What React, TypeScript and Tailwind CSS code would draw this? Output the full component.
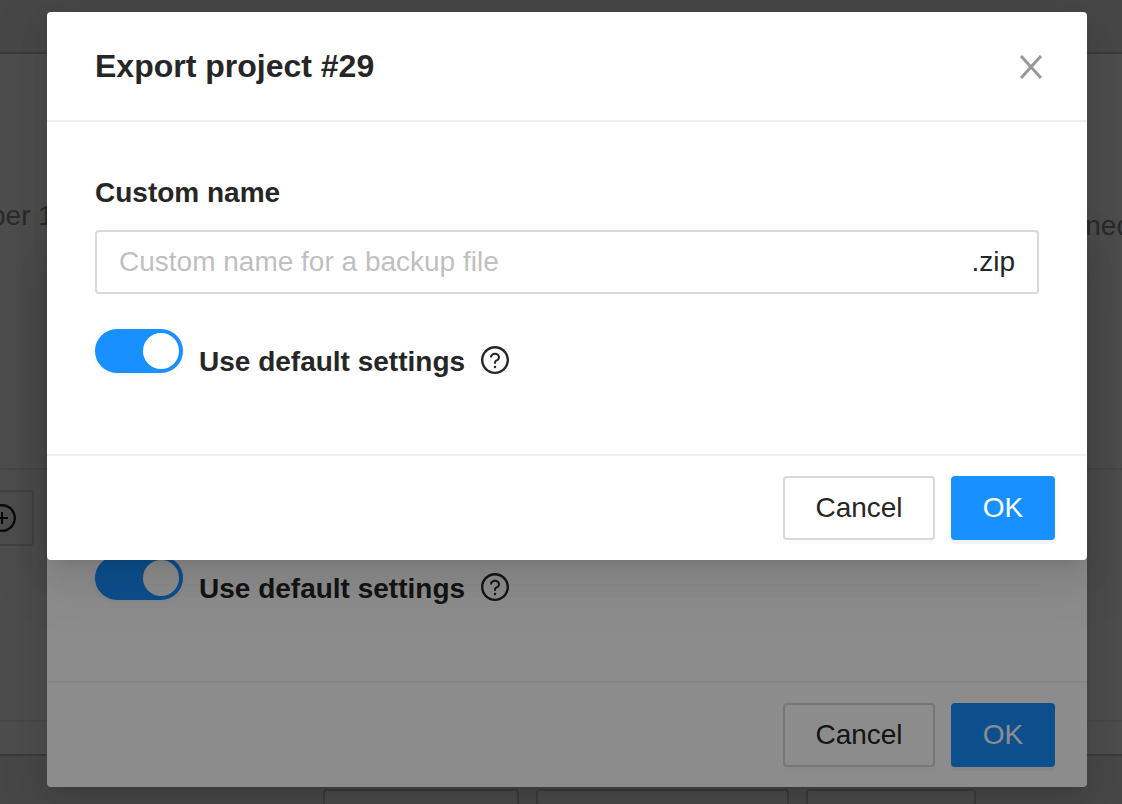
import React from 'react';
import { AiOutlineQuestionCircle, AiOutlinePlusCircle } from 'react-icons/ai';

function Mask() {
  return <div className="absolute inset-0 bg-black/45" />;
}

function ExportModal({ top }: { top: string }) {
  return (
    <div className={`absolute left-[47px] w-[1040px] rounded bg-white text-[#262626] shadow-[0_6px_12px_-8px_rgba(0,0,0,0.12),0_12px_32px_rgba(0,0,0,0.08),0_18px_56px_16px_rgba(0,0,0,0.05)] ${top}`}>
      <header className="flex h-[110px] items-center justify-between border-b-2 border-[#f0f0f0] pl-12 pr-11">
        <h2 className="text-[32px] font-bold leading-[44px]">Export project #29</h2>
        <svg viewBox="0 0 24 24" className="mt-[2px] size-6 text-[#999999]" fill="none" stroke="currentColor" strokeWidth="3">
          <path d="M2 1 22 23M22 1 2 23" />
        </svg>
      </header>

      <div className="h-[332px] px-12 pt-[49px]">
        <label className="block text-[28px] font-bold leading-[44px]">Custom name</label>
        <div className="mt-[15px] flex h-16 items-center justify-between rounded border-2 border-[#d9d9d9] px-[22px] text-[28px]">
          <span className="text-[#bfbfbf]">Custom name for a backup file</span>
          <span>.zip</span>
        </div>

        <div className="mt-[35px] flex items-start">
          <div className="flex h-11 w-[88px] items-center justify-end rounded-full bg-[#1890ff] pr-1 shadow-[0_2px_4px_rgba(0,0,0,0.05)]">
            <div className="size-9 rounded-full bg-white" />
          </div>
          <span className="ml-4 mt-[11px] text-[28px] font-bold leading-[44px]">Use default settings</span>
          <AiOutlineQuestionCircle className="ml-[14px] mt-[15px] size-8 text-[#262626]" />
        </div>
      </div>

      <footer className="flex h-[106px] items-start justify-end gap-4 border-t-2 border-[#f0f0f0] px-8 pt-5">
        <button className="h-16 w-[152px] rounded border-2 border-[#d9d9d9] bg-white text-[28px] shadow-[0_4px_0_rgba(0,0,0,0.015)]">
          Cancel
        </button>
        <button className="h-16 w-[104px] rounded bg-[#1890ff] text-[28px] text-white shadow-[0_4px_0_rgba(0,0,0,0.045)]">
          OK
        </button>
      </footer>
    </div>
  );
}

export default function App() {
  return (
    <div className="relative h-[804px] w-[1122px] overflow-hidden bg-[#ededed] font-['Liberation_Sans',Arial,sans-serif] text-[#262626]">
      {/* page behind the dialogs */}
      <div className="h-[54px] border-b-2 border-[#c4c4c4] bg-[#ededed]" />
      <div className="flex h-[416px] items-start justify-between border-b-2 border-[#ececec] bg-white text-[28px] text-[#8c8c8c]">
        <span className="-ml-[10px] mt-[144px] leading-[36px]">ber 1</span>
        <span className="-mr-[10px] mt-[154px] leading-[36px]">ned</span>
      </div>
      <div className="h-[252px] border-b-2 border-[#ececec] bg-white pt-5">
        <div className="-ml-[30px] flex h-14 w-[64px] items-center justify-center rounded border-2 border-[#d9d9d9]">
          <AiOutlinePlusCircle className="size-8" />
        </div>
      </div>
      <div className="h-[34px] border-b-2 border-[#c4c4c4] bg-white" />
      <div className="ml-[323px] mt-[33px] flex gap-[17px]">
        <div className="h-16 w-[196px] rounded border-2 border-[#c4c4c4] bg-[#f5f5f5]" />
        <div className="h-16 w-[253px] rounded border-2 border-[#c4c4c4] bg-[#f5f5f5]" />
        <div className="h-16 w-[170px] rounded border-2 border-[#c4c4c4] bg-[#f5f5f5]" />
      </div>

      <Mask />
      <ExportModal top="top-[239px]" />
      <Mask />
      <ExportModal top="top-3" />
    </div>
  );
}
